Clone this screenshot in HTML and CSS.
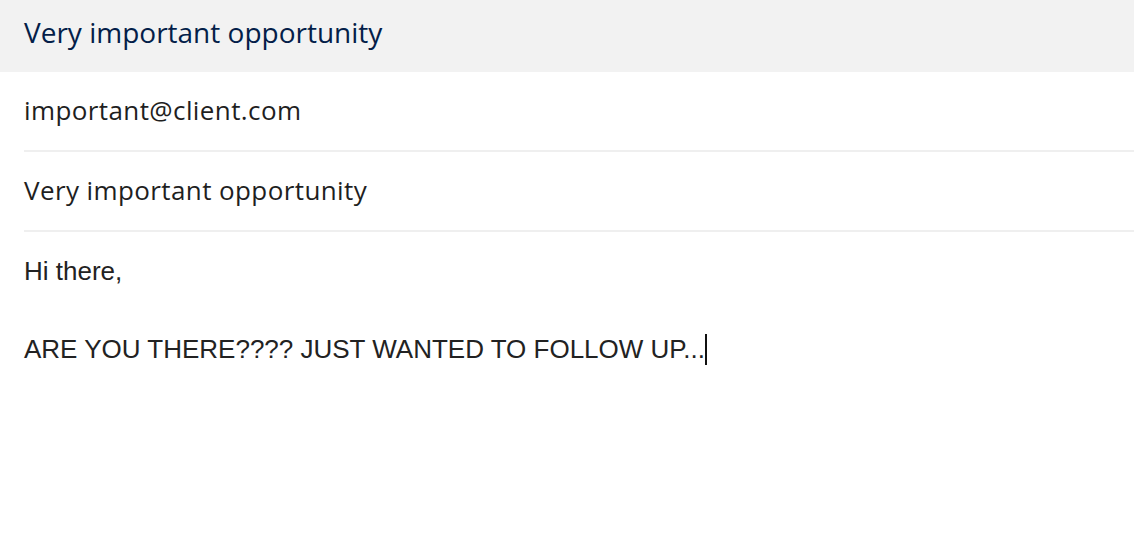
FILE: index.html
```html
<!DOCTYPE html>
<html>
<head>
<meta charset="utf-8">
<link rel="stylesheet" href="styles.css">
</head>
<body>
<div class="compose">
  <div class="header">Very important opportunity</div>
  <div class="field">important@client.com</div>
  <div class="field">Very important opportunity</div>
  <div class="body">
    <div class="line">Hi there,</div>
    <div class="line"><br></div>
    <div class="line">ARE YOU THERE???? JUST WANTED TO FOLLOW UP...<span class="caret"></span></div>
  </div>
</div>
</body>
</html>
```
FILE: styles.css
```css
html, body {
  margin: 0;
  padding: 0;
  background: #ffffff;
}
.compose {
  width: 1134px;
  height: 534px;
  display: flex;
  flex-direction: column;
}
.header {
  height: 72px;
  background: #f2f2f2;
  color: #041e49;
  font-family: "Open Sans", sans-serif;
  font-size: 28px;
  font-weight: 500;
  display: flex;
  align-items: center;
  padding-left: 24px;
  padding-bottom: 8px;
  box-sizing: border-box;
}
.field {
  margin-left: 24px;
  height: 80px;
  border-bottom: 2px solid #efefef;
  box-sizing: border-box;
  display: flex;
  align-items: center;
  font-family: "Open Sans", sans-serif;
  font-size: 26px;
  letter-spacing: 0.4px;
  color: #1f1f1f;
  padding-bottom: 2px;
}
.body {
  padding: 20px 24px 0 24px;
  font-family: "Liberation Sans", Arial, sans-serif;
  font-size: 26px;
  line-height: 39px;
  color: #222222;
}
.caret {
  display: inline-block;
  width: 2px;
  height: 31px;
  background: #111;
  vertical-align: -7px;
  margin-left: 0;
}
```
